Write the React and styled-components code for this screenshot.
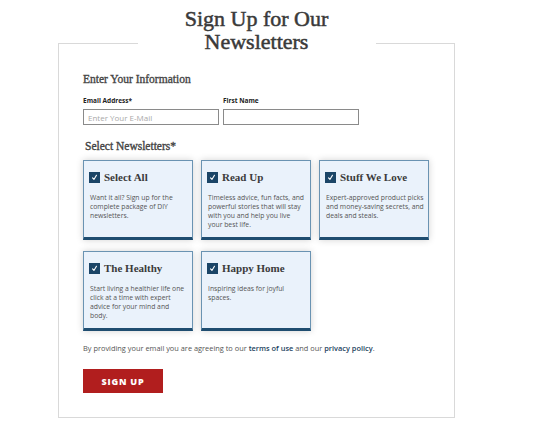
import React from "react";
import styled, { createGlobalStyle } from "styled-components";

const GlobalStyle = createGlobalStyle`
  html, body { margin: 0; padding: 0; background: #ffffff; }
  body { font-family: "Open Sans", "Liberation Sans", sans-serif; color: #333; }
  * { box-sizing: border-box; }
`;

const Page = styled.div`
  padding: 7px 0 0 58px;
`;

const Wrapper = styled.div`
  width: 397px;
`;

const Header = styled.div`
  display: flex;
`;

const Edge = styled.div`
  flex: 1;
  margin-top: 36px;
  border-top: 1px solid #d9d9d9;
  ${(p) => (p.$side === "left" ? "border-left" : "border-right")}: 1px solid #d9d9d9;
`;

const Title = styled.h1`
  margin: 0;
  width: 238px;
  text-align: center;
  font-family: "Liberation Serif", "DejaVu Serif", serif;
  font-weight: 400;
  font-size: 22px;
  line-height: 23px;
  color: #3a3a3a;
  -webkit-text-stroke: 0.5px #3a3a3a;
`;

const Body = styled.div`
  border: 1px solid #d9d9d9;
  border-top: none;
  padding: 19px 24px 24px 24px;
`;

const SectionHeading = styled.h2`
  margin: 0;
  font-family: "Liberation Serif", "DejaVu Serif", serif;
  font-weight: 400;
  font-size: 11.5px;
  line-height: 14px;
  color: #444;
  -webkit-text-stroke: 0.35px #444;
  padding-left: ${(p) => p.$indent || 0}px;
`;

const Fields = styled.div`
  display: grid;
  grid-template-columns: 136px 136px;
  column-gap: 4px;
  margin-top: 10px;
`;

const Field = styled.label`
  display: flex;
  flex-direction: column;
  gap: 4px;
`;

const FieldLabel = styled.span`
  font-size: 6.5px;
  line-height: 9px;
  font-weight: 700;
  color: #222;
`;

const Input = styled.input`
  height: 16px;
  border: 1px solid #8a8a8a;
  border-radius: 0;
  padding: 0 4px;
  font-family: "Open Sans", sans-serif;
  font-size: 8px;
  color: #333;
  outline: none;
  &::placeholder { color: #a9a9a9; }
`;

const NewsHeading = styled(SectionHeading)`
  margin-top: 14px;
`;

const Cards = styled.div`
  display: grid;
  grid-template-columns: repeat(3, 110px);
  column-gap: 8px;
  row-gap: 11px;
  margin-top: 7px;
`;

const Card = styled.div`
  height: 80px;
  background: #eaf2fb;
  border: 1px solid #6a93b2;
  border-bottom: 3px solid #1f4d70;
  box-shadow: 0 0 7px rgba(0, 0, 0, 0.18);
  padding: 10px 4px 0 5px;
`;

const CardHead = styled.div`
  display: flex;
  align-items: center;
  gap: 4px;
`;

const Check = styled.span`
  width: 11px;
  height: 11px;
  flex: none;
  background: #1b4567;
  display: flex;
  align-items: center;
  justify-content: center;
`;

const CardTitle = styled.span`
  font-family: "Liberation Serif", "DejaVu Serif", serif;
  font-weight: 700;
  font-size: 11px;
  line-height: 12px;
  color: #3b3b3b;
`;

const CardText = styled.p`
  margin: 10px 0 0 1px;
  font-size: 6.8px;
  line-height: 9px;
  color: #555;
`;

const Line = styled.span`
  display: block;
  white-space: nowrap;
`;

const Disclaimer = styled.p`
  margin: 12px 0 0 0;
  font-size: 7.4px;
  line-height: 10px;
  color: #555;
`;

const Link = styled.a`
  color: #1d3f5e;
  font-weight: 600;
  text-decoration: none;
`;

const Button = styled.button`
  margin-top: 16px;
  width: 80px;
  height: 24px;
  background: #b11e1e;
  border: none;
  color: #fff;
  font-family: "Open Sans", sans-serif;
  font-weight: 800;
  font-size: 9px;
  letter-spacing: 0.8px;
  cursor: pointer;
`;

const newsletters = [
  {
    title: "Select All",
    lines: ["Want it all? Sign up for the", "complete package of DIY", "newsletters."],
  },
  {
    title: "Read Up",
    lines: ["Timeless advice, fun facts, and", "powerful stories that will stay", "with you and help you live", "your best life."],
  },
  {
    title: "Stuff We Love",
    lines: ["Expert-approved product picks", "and money-saving secrets, and", "deals and steals."],
  },
  {
    title: "The Healthy",
    lines: ["Start living a healthier life one", "click at a time with expert", "advice for your mind and", "body."],
  },
  {
    title: "Happy Home",
    lines: ["Inspiring ideas for joyful", "spaces."],
  },
];

const CheckMark = () => (
  <svg width="7" height="7" viewBox="0 0 10 10">
    <path d="M2.2 5.6 L4.2 7.8 L7.8 1.8" fill="none" stroke="#fff" strokeWidth="1.6" strokeLinecap="round" strokeLinejoin="round" />
  </svg>
);

export default function App() {
  return (
    <>
      <GlobalStyle />
      <Page>
        <Wrapper>
          <Header>
            <Edge $side="left" />
            <Title>Sign Up for Our Newsletters</Title>
            <Edge $side="right" />
          </Header>
          <Body>
            <SectionHeading>Enter Your Information</SectionHeading>
            <Fields>
              <Field>
                <FieldLabel>Email Address*</FieldLabel>
                <Input type="email" placeholder="Enter Your E-Mail" />
              </Field>
              <Field>
                <FieldLabel>First Name</FieldLabel>
                <Input type="text" />
              </Field>
            </Fields>
            <NewsHeading $indent={2}>Select Newsletters*</NewsHeading>
            <Cards>
              {newsletters.map((n) => (
                <Card key={n.title}>
                  <CardHead>
                    <Check><CheckMark /></Check>
                    <CardTitle>{n.title}</CardTitle>
                  </CardHead>
                  <CardText>
                    {n.lines.map((l) => (
                      <Line key={l}>{l}</Line>
                    ))}
                  </CardText>
                </Card>
              ))}
            </Cards>
            <Disclaimer>
              By providing your email you are agreeing to our <Link href="#">terms of use</Link> and our{" "}
              <Link href="#">privacy policy</Link>.
            </Disclaimer>
            <Button type="button">SIGN UP</Button>
          </Body>
        </Wrapper>
      </Page>
    </>
  );
}
